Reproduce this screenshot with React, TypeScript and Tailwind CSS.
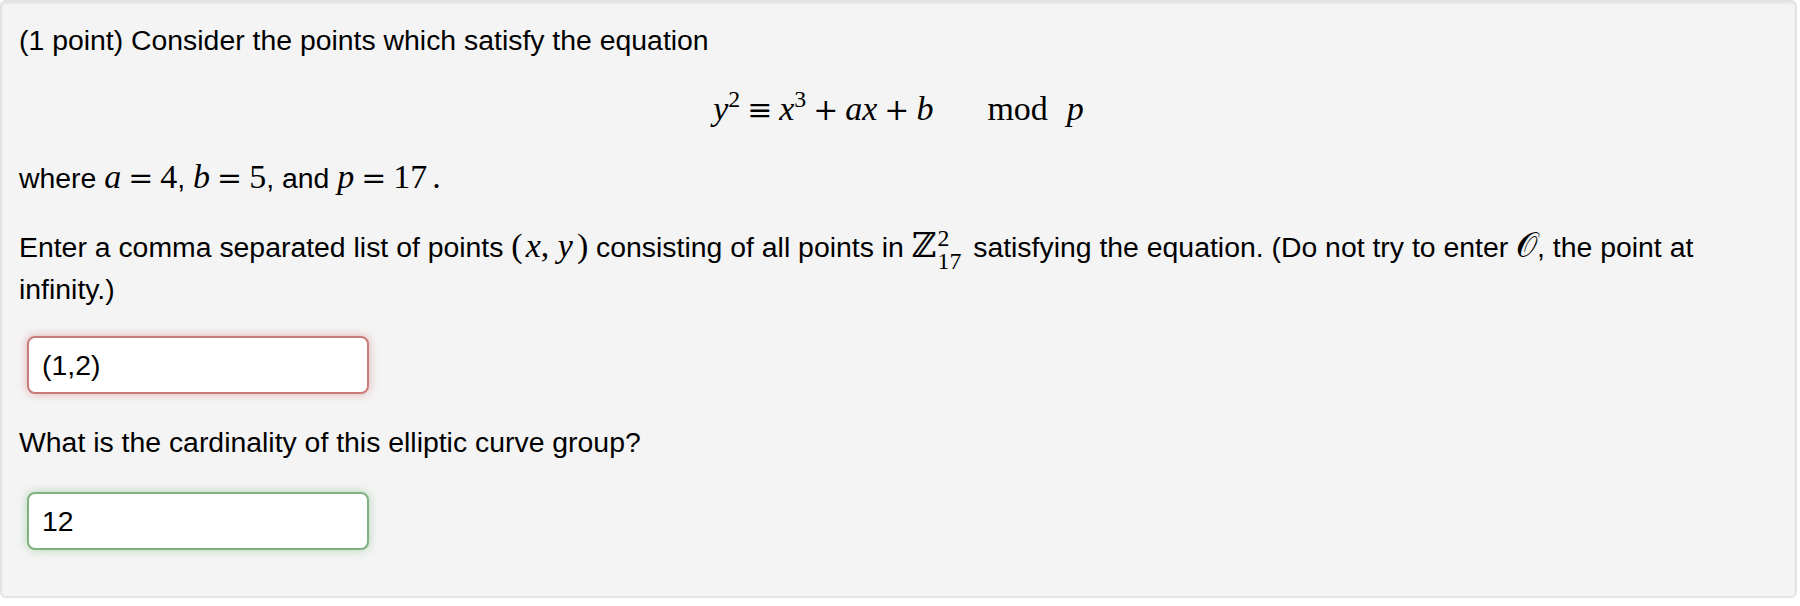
import React from 'react';

const serif = "font-['Liberation_Serif','DejaVu_Serif',serif]";

// operators in a wider serif face, close to the TeX glyphs
const Op: React.FC<{ children: React.ReactNode; className?: string }> = ({ children, className = '' }) => (
  <span className={`font-['DejaVu_Serif',serif] not-italic text-[0.88em] ${className}`}>{children}</span>
);

const Sup: React.FC<{ children: React.ReactNode }> = ({ children }) => (
  <sup className="text-[0.7em] not-italic -top-[0.55em]">{children}</sup>
);

const M: React.FC<{ children: React.ReactNode }> = ({ children }) => (
  <span className={`${serif} text-[34px] leading-none whitespace-nowrap`}>{children}</span>
);

const App: React.FC = () => {
  return (
    <div className="min-h-screen bg-white">
      <div className="w-[1797px] h-[598px] bg-[#f4f4f4] border-2 border-[#e3e3e3] rounded-[6px] shadow-[inset_0_2px_2px_rgba(0,0,0,0.05)] pl-[17px] pr-[17px] pt-[17px] font-['Liberation_Sans',Arial,sans-serif] text-[28.4px] leading-[42px] text-black">
        <p>(1 point) Consider the points which satisfy the equation</p>

        {/* display equation */}
        <div className="h-[96px] flex items-center justify-center">
          <M>
            <i>y</i>
            <Sup>2</Sup>
            <Op className="mx-[7px]">≡</Op>
            <i>x</i>
            <Sup>3</Sup>
            <Op className="mx-[7px]">+</Op>
            <i>ax</i>
            <Op className="mx-[7px]">+</Op>
            <i>b</i>
            <span className="ml-[54px]">mod</span>
            <i className="ml-[19px]">p</i>
          </M>
        </div>

        <p>
          where{' '}
          <M>
            <i>a</i>
            <Op className="mx-[7px]">=</Op>4
          </M>
          ,{' '}
          <M>
            <i>b</i>
            <Op className="mx-[7px]">=</Op>5
          </M>
          , and{' '}
          <M>
            <i>p</i>
            <Op className="mx-[7px]">=</Op>17<span className="ml-[0.15em]">.</span>
          </M>
        </p>

        <p className="mt-[27px]">
          Enter a comma separated list of points{' '}
          <M>
            <span className="mr-[3px]">(</span>
            <i>x</i>,<i className="ml-[0.25em]">y</i>
            <span className="ml-[4px]">)</span>
          </M>{' '}
          consisting of all points in{' '}
          <M>
            ℤ
            <span className="inline-block align-[-0.5em] text-[0.7em] leading-[0.95] ml-[0.04em] mr-[4px] -mb-[14px] -mt-[4px]">
              <span className="block">2</span>
              <span className="block">17</span>
            </span>
          </M>{' '}
          satisfying the equation. (Do not try to enter <M>𝒪</M>, the point at
          <br />
          infinity.)
        </p>

        <input
          readOnly
          value="(1,2)"
          className="block mt-[26px] ml-[8px] w-[342px] h-[58px] rounded-[8px] border-2 border-[#c97b7b] bg-white px-[13px] text-[28.4px] text-black outline-none shadow-[0_0_10px_rgba(200,90,90,0.45)] font-['Liberation_Sans',Arial,sans-serif]"
        />

        <p className="mt-[27px]">What is the cardinality of this elliptic curve group?</p>

        <input
          readOnly
          value="12"
          className="block mt-[29px] ml-[8px] w-[342px] h-[58px] rounded-[8px] border-2 border-[#80b180] bg-white px-[13px] text-[28.4px] text-black outline-none shadow-[0_0_10px_rgba(100,170,100,0.45)] font-['Liberation_Sans',Arial,sans-serif]"
        />
      </div>
    </div>
  );
};

export default App;
